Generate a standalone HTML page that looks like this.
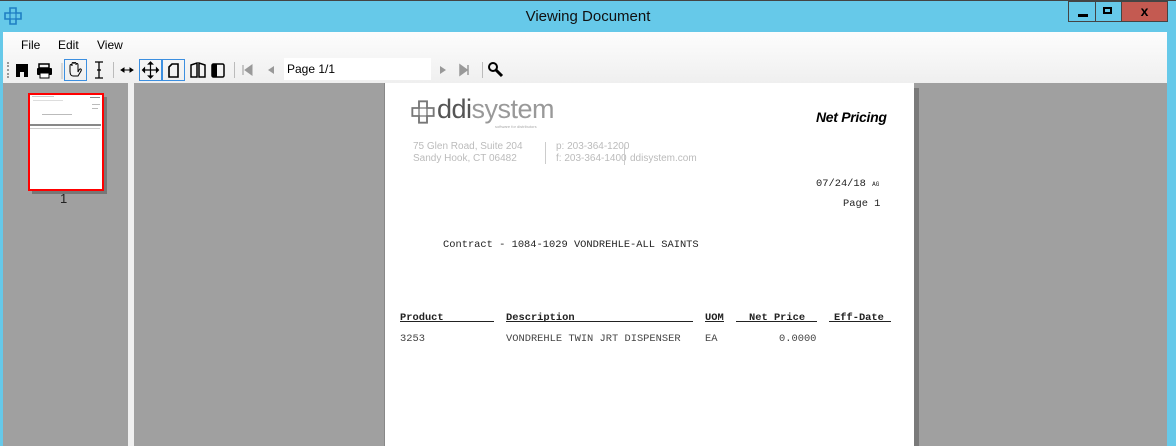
<!DOCTYPE html><html><head><style>
body{margin:0;width:1176px;height:446px;overflow:hidden;background:#66c9e9;font-family:"Liberation Sans",sans-serif;position:relative}
.a{position:absolute}
.mono{font-family:"Liberation Mono",monospace;font-size:10.4px;color:#222;white-space:pre}
.tb{font-size:12px;color:#000}
.sel{border:1px solid #3c8fe0;box-sizing:border-box}
.u{text-decoration:underline}
.g{position:absolute;height:1px;background:#bbb}
</style></head><body>
<div class="a" style="left:0;top:0;width:1176px;height:1px;background:#444"></div>
<svg class="a" style="left:4px;top:7px" width="18" height="18" viewBox="0 0 18 18"><path d="M6 1h6v5h5v6h-5v5H6v-5H1V6h5z" fill="none" stroke="#1f7fc4" stroke-width="1.6"/><path d="M6 6h6v6H6z" fill="none" stroke="#1f7fc4" stroke-width="1.2"/></svg>
<div class="a" style="left:0;width:1176px;top:8px;text-align:center;font-size:15px;color:#111">Viewing Document</div>
<div class="a" style="left:1068px;top:1px;width:28px;height:21px;border:1px solid #444;box-sizing:border-box"><div class="a" style="left:9px;top:12px;width:10px;height:3px;background:#000"></div></div>
<div class="a" style="left:1096px;top:1px;width:26px;height:21px;border:1px solid #444;border-left:0;box-sizing:border-box"><div class="a" style="left:7px;top:5px;width:9px;height:7px;border:2px solid #000;box-sizing:border-box"></div></div>
<div class="a" style="left:1122px;top:1px;width:46px;height:21px;background:#c45a51;border:1px solid #444;border-left:0;box-sizing:border-box;text-align:center;font-weight:bold;font-size:14px;line-height:19px">x</div>
<div class="a" style="left:3px;top:32px;width:1164px;height:51px;background:linear-gradient(#fdfdfd,#efefef)"></div>
<div class="a tb" style="left:21px;top:38px">File</div>
<div class="a tb" style="left:58px;top:38px">Edit</div>
<div class="a tb" style="left:97px;top:38px">View</div>
<div class="a" style="left:7px;top:62px;width:2px;height:16px;border-left:2px dotted #999"></div>
<svg class="a" style="left:14px;top:61px" width="190" height="20">
<path d="M2 3h12v13h-4v-5H6v5H2z" fill="#000"/>
<rect x="25" y="3" width="10" height="4" fill="none" stroke="#000" stroke-width="1.5"/><rect x="23" y="7" width="15" height="7" rx="1" fill="#000"/><rect x="26" y="12" width="9" height="5" fill="#fff" stroke="#000"/>
<line x1="48" y1="2" x2="48" y2="18" stroke="#bbb"/>
</svg>
<div class="a sel" style="left:64px;top:59px;width:23px;height:22px"></div>
<svg class="a" style="left:64px;top:59px" width="23" height="22"><path d="M6 13V7m0 0c0-2 2-2 2 0V5c0-2 2-2 2 0v0c0-2 2-2 2 0v1c0-2 2-2 2 0v7l1-2c1-2 3-1 2 1l-3 5H9c-2 0-3-2-3-5z" fill="none" stroke="#000" stroke-width="1"/></svg>
<svg class="a" style="left:92px;top:60px" width="14" height="20"><path d="M3 2h8M7 2v16M3 18h8M5 10h4" stroke="#000" stroke-width="1.3"/></svg>
<div class="a" style="left:113px;top:62px;width:1px;height:16px;background:#bbb"></div>
<svg class="a" style="left:119px;top:62px" width="16" height="16"><path d="M2 8h12M2 8l3-2v4zM14 8l-3-2v4z" stroke="#000" fill="#000"/></svg>
<div class="a sel" style="left:139px;top:59px;width:23px;height:22px"></div>
<svg class="a" style="left:139px;top:59px" width="23" height="22"><path d="M11.5 3v16M3.5 11h16M11.5 3l-2 2h4zM11.5 19l-2-2h4zM3.5 11l2-2v4zM19.5 11l-2-2v4z" stroke="#000" fill="#000" stroke-width="1.2"/></svg>
<div class="a sel" style="left:162px;top:59px;width:23px;height:22px"></div>
<svg class="a" style="left:162px;top:59px" width="23" height="22"><path d="M10 5h6v13H7V8z" fill="none" stroke="#000" stroke-width="1.6"/></svg>
<svg class="a" style="left:188px;top:60px" width="20" height="20"><path d="M3 5l6-2v14H3zM17 5l-6-2v14h6z" fill="none" stroke="#000" stroke-width="1.5"/></svg>
<svg class="a" style="left:210px;top:60px" width="16" height="20"><rect x="2" y="4" width="12" height="13" rx="1.5" fill="none" stroke="#000" stroke-width="1.5"/><rect x="2" y="4" width="5" height="13" fill="#000"/></svg>
<div class="a" style="left:234px;top:62px;width:1px;height:16px;background:#bbb"></div>
<svg class="a" style="left:240px;top:62px" width="40" height="16"><path d="M3 3v10M5 8l7-5v10z" stroke="#999" fill="#999"/><path d="M28 8l6-4v8z" fill="#999"/></svg>
<div class="a" style="left:284px;top:58px;width:147px;height:22px;background:#fff"></div>
<div class="a tb" style="left:287px;top:62px">Page 1/1</div>
<svg class="a" style="left:436px;top:62px" width="40" height="16"><path d="M4 4l6 4-6 4z" fill="#999"/><path d="M24 3l7 5-7 5zM32 3v10" stroke="#999" fill="#999" stroke-width="1.5"/></svg>
<div class="a" style="left:482px;top:62px;width:1px;height:16px;background:#bbb"></div>
<svg class="a" style="left:487px;top:61px" width="18" height="18"><circle cx="6" cy="6" r="4" fill="none" stroke="#000" stroke-width="2"/><path d="M9 9l6 6" stroke="#000" stroke-width="3"/></svg>
<div class="a" style="left:3px;top:83px;width:125px;height:363px;background:#a0a0a0"></div>
<div class="a" style="left:128px;top:83px;width:6px;height:363px;background:#f0f0f0"></div>
<div class="a" style="left:134px;top:83px;width:1033px;height:363px;background:#a0a0a0"></div>
<div class="a" style="left:32px;top:97px;width:75px;height:97px;background:#777"></div>
<div class="a" style="left:28px;top:93px;width:76px;height:98px;background:#fff;border:2px solid #f00;box-sizing:border-box"></div>
<div class="g" style="left:32px;top:96px;width:22px;background:#ccc"></div>
<div class="g" style="left:90px;top:97px;width:10px;background:#888"></div>
<div class="g" style="left:33px;top:100px;width:30px;background:#ddd"></div>
<div class="g" style="left:92px;top:104px;width:8px"></div>
<div class="g" style="left:92px;top:108px;width:6px"></div>
<div class="g" style="left:42px;top:114px;width:30px"></div>
<div class="a" style="left:30px;top:124px;width:71px;height:2px;background:#888"></div>
<div class="g" style="left:30px;top:128px;width:70px;background:#ccc"></div>
<div class="a" style="left:60px;top:191px;font-size:13px;color:#222">1</div>
<div class="a" style="left:914px;top:88px;width:5px;height:358px;background:#7a7a7a"></div>
<div class="a" style="left:384px;top:83px;width:530px;height:363px;background:#fff;border-left:1px solid #888;box-sizing:border-box"></div>
<svg class="a" style="left:411px;top:100px" width="24" height="24" viewBox="0 0 18 18"><path d="M6 1h6v5h5v6h-5v5H6v-5H1V6h5z" fill="none" stroke="#777" stroke-width="1.4"/><path d="M6 6h6v6H6z" fill="none" stroke="#777" stroke-width="1"/></svg>
<div class="a" style="left:437px;top:94px;font-size:27px;color:#666;letter-spacing:-0.5px"><span style="color:#555">ddi</span><span style="color:#999">system</span></div>
<div class="a" style="left:495px;top:124px;font-size:4px;color:#aaa">software for distributors</div>
<div class="a" style="left:816px;top:109px;font-size:14px;font-weight:bold;font-style:italic;color:#000;letter-spacing:-0.3px">Net Pricing</div>
<div class="a" style="left:413px;top:141px;font-size:10px;color:#bbb;line-height:12px">75 Glen Road, Suite 204<br>Sandy Hook, CT 06482</div>
<div class="a" style="left:545px;top:142px;width:1px;height:22px;background:#ccc"></div>
<div class="a" style="left:556px;top:141px;font-size:10px;color:#bbb;line-height:12px">p: 203-364-1200<br>f: 203-364-1400</div>
<div class="a" style="left:624px;top:145px;width:1px;height:20px;background:#ccc"></div>
<div class="a" style="left:630px;top:153px;font-size:10px;color:#bbb">ddisystem.com</div>
<div class="a mono" style="left:816px;top:178px">07/24/18 <span style="font-size:6px">AG</span></div>
<div class="a mono" style="left:843px;top:198px">Page 1</div>
<div class="a mono" style="left:443px;top:239px">Contract - 1084-1029 VONDREHLE-ALL SAINTS</div>
<div class="a mono" style="left:400px;top:312px;font-weight:bold">Product</div>
<div class="a mono" style="left:506px;top:312px;font-weight:bold">Description</div>
<div class="a mono" style="left:705px;top:312px;font-weight:bold">UOM</div>
<div class="a mono" style="left:749px;top:312px;font-weight:bold">Net Price</div>
<div class="a mono" style="left:834px;top:312px;font-weight:bold">Eff-Date</div>
<div class="a" style="left:400px;top:321px;width:94px;height:1px;background:#222"></div>
<div class="a" style="left:506px;top:321px;width:187px;height:1px;background:#222"></div>
<div class="a" style="left:705px;top:321px;width:19px;height:1px;background:#222"></div>
<div class="a" style="left:736px;top:321px;width:81px;height:1px;background:#222"></div>
<div class="a" style="left:829px;top:321px;width:62px;height:1px;background:#222"></div>
<div class="a mono" style="left:400px;top:333px;color:#444">3253</div>
<div class="a mono" style="left:506px;top:333px;color:#444">VONDREHLE TWIN JRT DISPENSER</div>
<div class="a mono" style="left:705px;top:333px;color:#444">EA</div>
<div class="a mono" style="left:779px;top:333px;color:#444">0.0000</div>
</body></html>
